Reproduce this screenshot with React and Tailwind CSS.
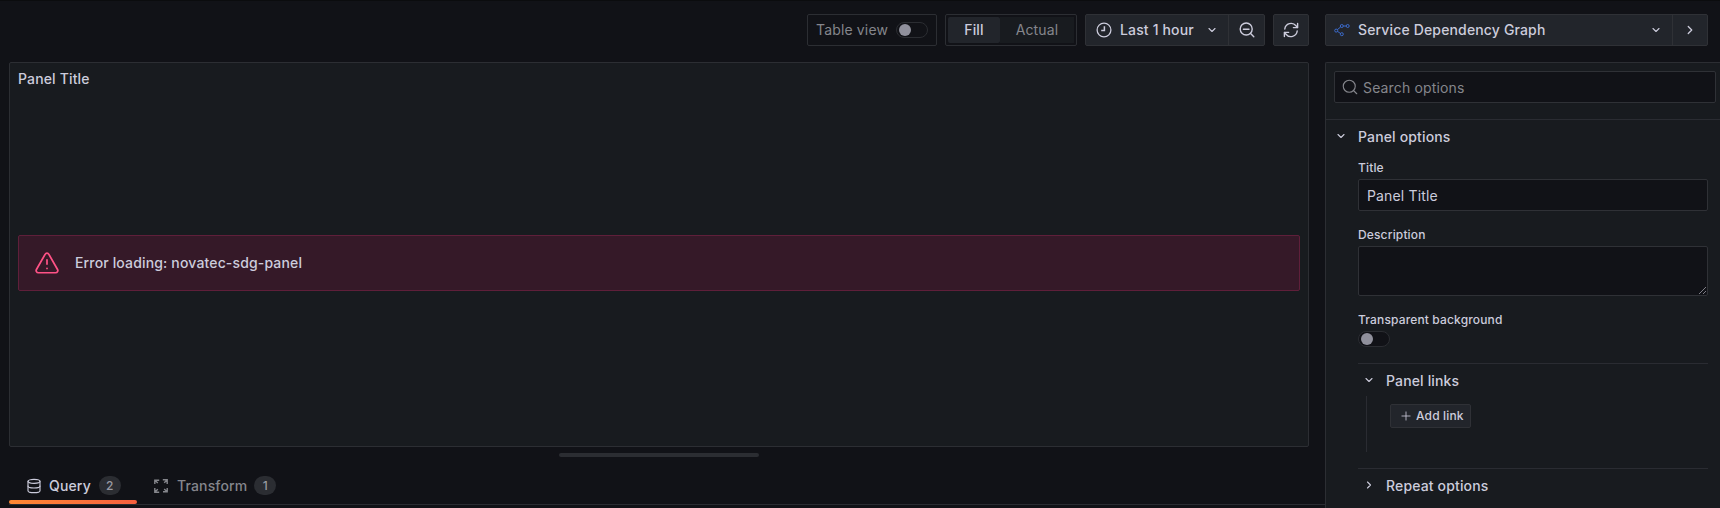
import React from 'react';
import { ChevronDown, ChevronRight, Database, Plus, Search, TriangleAlert } from 'lucide-react';

const Switch = ({ className = '' }) => (
  <div className={`w-[32px] h-[16px] rounded-full border border-[#2b2d32] bg-[#111217] flex items-center pl-[2px] ${className}`}>
    <div className="w-[12px] h-[12px] rounded-full bg-[#90909c]" />
  </div>
);

const ClockIcon = () => (
  <svg width="16" height="16" viewBox="0 0 16 16" fill="none" stroke="currentColor" strokeWidth="1.3">
    <circle cx="8" cy="8" r="6.9" />
    <path d="M8.4 4.2v4.2H5.2" strokeWidth="1.5" />
  </svg>
);

const ZoomOutIcon = () => (
  <svg width="16" height="16" viewBox="0 0 16 16" fill="none" stroke="currentColor" strokeWidth="1.4" strokeLinecap="round">
    <circle cx="7.2" cy="7" r="6" />
    <path d="M4.4 7.2h5.6M11.6 11.6l3.2 3.2" />
  </svg>
);

const SyncIcon = () => (
  <svg width="16" height="16" viewBox="0 0 16 16" fill="none" stroke="currentColor" strokeWidth="1.4" strokeLinecap="round" strokeLinejoin="round">
    <path d="M1.8 7A6.3 6.3 0 0 1 13 3.8l1.4 1.6" />
    <path d="M14.6 1.4v4.2h-4.2" />
    <path d="M14.2 9A6.3 6.3 0 0 1 3 12.2l-1.4-1.6" />
    <path d="M1.4 14.6v-4.2h4.2" />
  </svg>
);

const GraphIcon = () => (
  <svg width="16" height="16" viewBox="0 0 16 16" fill="none" stroke="#3d71d9" strokeWidth="0.9">
    <circle cx="2.2" cy="8.6" r="1.5" />
    <circle cx="7.8" cy="4" r="1.5" />
    <circle cx="13.7" cy="4" r="1.5" />
    <circle cx="7.8" cy="12.2" r="1.5" />
    <path d="M3.4 7.6 6.6 5M9.3 4h2.9M3.5 9.4 6.4 11.4" />
  </svg>
);

const TransformIcon = () => (
  <svg width="14" height="14" viewBox="0 0 14 14" fill="none" stroke="currentColor" strokeWidth="1.4">
    <path d="M.8 5V1.2h4.4M.9 1.2 3.8 4" />
    <path d="M8.8.8h4.4V5M13.1 1 10.2 3.8" />
    <path d="M13.2 9v3.8H9M13.1 12.8 10.2 10" />
    <path d="M5.2 13.2H.8V9M.9 13 3.8 10.2" />
  </svg>
);

const Divider = () => <div className="h-px bg-[#2a2c32]" />;

const Field = ({ label, children }) => (
  <div>
    <div className="h-[16px] text-[12px] leading-[16px] font-medium text-[#ccccdc] mb-[3px]">{label}</div>
    {children}
  </div>
);

export default function App() {
  return (
    <div className="h-[508px] overflow-hidden bg-[#111217] text-[#ccccdc] flex flex-col font-['Inter',sans-serif] text-[14px] tracking-[0.01071em] border-t border-[#0b0c0e]">
      {/* top toolbar */}
      <div className="h-[61px] flex justify-end items-start pt-[13px] pr-[12px] shrink-0">
        <div className="h-[32px] w-[130px] flex items-center pl-[8px] pr-[8px] border border-[#2c2e33] rounded-[2px] text-[#85868c]">
          <span className="pb-[2px]">Table view</span>
          <Switch className="ml-auto" />
        </div>
        <div className="h-[32px] w-[132px] ml-[8px] flex items-center p-[2px] border border-[#2c2e33] rounded-[2px]">
          <div className="h-[26px] w-[52px] flex items-center justify-center bg-[#22252b] rounded-[2px] font-medium pb-[2px]">Fill</div>
          <div className="h-[26px] flex-1 flex items-center justify-center bg-[#181b1f] text-[#85868c] pb-[2px]">Actual</div>
        </div>
        <div className="h-[32px] w-[180px] ml-[8px] flex bg-[#22252b] border border-[#2f3136] rounded-[2px]">
          <div className="w-[143px] flex items-center pl-[10px] font-medium border-r border-[#2f3136]">
            <ClockIcon />
            <span className="ml-[8px] pb-[2px]">Last 1 hour</span>
            <ChevronDown size={12} strokeWidth={2.2} className="ml-[12px]" />
          </div>
          <div className="flex-1 flex items-center justify-center">
            <ZoomOutIcon />
          </div>
        </div>
        <div className="h-[32px] w-[36px] ml-[8px] flex items-center justify-center bg-[#22252b] border border-[#2f3136] rounded-[2px]">
          <SyncIcon />
        </div>
        <div className="h-[32px] w-[383px] ml-[16px] flex bg-[#22252b] border border-[#2f3136] rounded-[2px]">
          <div className="flex-1 flex items-center pl-[8px] font-medium border-r border-[#2f3136]">
            <GraphIcon />
            <span className="ml-[8px] flex-1 pb-[2px]">Service Dependency Graph</span>
            <ChevronDown size={12} strokeWidth={2.2} className="mr-[10px]" />
          </div>
          <div className="w-[34px] flex items-center justify-center">
            <ChevronRight size={14} strokeWidth={2.2} />
          </div>
        </div>
      </div>

      <div className="flex-1 flex min-h-0">
        {/* left column */}
        <div className="w-[1325px] pl-[9px] pr-[16px] flex flex-col">
          <div className="h-[385px] shrink-0 bg-[#181b1f] border border-[#2c2e33] rounded-[2px] flex flex-col">
            <div className="h-[32px] pl-[8px] pb-[2px] flex items-center font-medium">Panel Title</div>
            <div className="flex-1 flex items-center px-[8px] pb-[15px]">
              <div className="w-full h-[56px] flex items-center bg-[#351928] border border-[#5f1f3a] rounded-[2px] pl-[15px] font-medium">
                <TriangleAlert size={26} strokeWidth={1.6} className="text-[#ff5286]" />
                <span className="ml-[15px] pb-[2px]">Error loading: novatec-sdg-panel</span>
              </div>
            </div>
          </div>
          <div className="h-[4px] w-[200px] rounded-full bg-[#2b2d32] self-center mt-[6px] shrink-0" />
          <div className="flex mt-[15px] h-[33px] shrink-0 border-b border-[#2a2c32] -mr-[16px]">
            <div className="relative w-[128px] flex items-center pl-[17px] pb-[5px] font-medium">
              <Database size={16} strokeWidth={1.7} />
              <span className="ml-[7px]">Query</span>
              <span className="ml-[8px] w-[22px] h-[19px] rounded-full bg-[#2b2d32] flex items-center justify-center text-[12px] text-[#9a9ba3]">2</span>
              <div className="absolute left-0 right-0 bottom-0 h-[4px] rounded-[2px] bg-gradient-to-r from-[#ff8833] to-[#f55f3e]" />
            </div>
            <div className="flex items-center pl-[17px] pb-[5px] font-medium text-[#85868c]">
              <TransformIcon />
              <span className="ml-[9px]">Transform</span>
              <span className="ml-[7px] w-[22px] h-[19px] rounded-full bg-[#2b2d32] flex items-center justify-center text-[12px] text-[#9a9ba3]">1</span>
            </div>
          </div>
        </div>

        {/* options pane */}
        <div className="flex-1 bg-[#181b1f] border-l border-t border-[#2c2e33] rounded-tl-[2px] flex flex-col">
          <div className="h-[56px] pl-[8px] pr-[4px] pt-[8px] shrink-0">
            <div className="h-[32px] flex items-center bg-[#111217] border border-[#2f3136] rounded-[2px] pl-[6px] text-[#85868c]">
              <Search size={18} strokeWidth={1.5} />
              <span className="ml-[4px]">Search options</span>
            </div>
          </div>
          <Divider />
          <div className="h-[32px] flex items-center pl-[9px] shrink-0 font-medium">
            <ChevronDown size={12} strokeWidth={2.2} />
            <span className="ml-[11px]">Panel options</span>
          </div>
          <div className="pl-[32px] pr-[12px] flex flex-col">
            <div className="mt-[8px]">
              <Field label="Title">
                <div className="h-[32px] flex items-center bg-[#111217] border border-[#2f3136] rounded-[2px] pl-[8px]">Panel Title</div>
              </Field>
            </div>
            <div className="mt-[16px]">
              <Field label="Description">
                <div className="h-[50px] relative bg-[#111217] border border-[#2f3136] rounded-[2px]">
                  <svg className="absolute right-0 bottom-0" width="9" height="9" viewBox="0 0 9 9" stroke="#9a9ba3" strokeWidth="0.8">
                    <path d="M1 8 8 1M5 8l3-3" />
                  </svg>
                </div>
              </Field>
            </div>
            <div className="mt-[16px]">
              <div className="h-[16px] text-[12px] leading-[16px] font-medium">Transparent background</div>
              <Switch className="mt-[3px]" />
            </div>
            <div className="mt-[16px]"><Divider /></div>
            <div className="h-[32px] flex items-center pl-[5px] font-medium">
              <ChevronDown size={12} strokeWidth={2.2} />
              <span className="ml-[11px]">Panel links</span>
            </div>
            <div className="ml-[8px] h-[56px] border-l border-[#2a2c32] pl-[23px] pt-[8px]">
              <div className="w-[81px] h-[24px] flex items-center pl-[8px] bg-[#22252b] border border-[#2f3136] rounded-[2px] text-[12px] font-medium">
                <Plus size={14} strokeWidth={1.4} />
                <span className="ml-[3px] pb-[1px]">Add link</span>
              </div>
            </div>
            <div className="mt-[16px]"><Divider /></div>
            <div className="h-[32px] flex items-center pl-[5px] font-medium">
              <ChevronRight size={12} strokeWidth={2.2} />
              <span className="ml-[11px]">Repeat options</span>
            </div>
          </div>
        </div>
      </div>
    </div>
  );
}
